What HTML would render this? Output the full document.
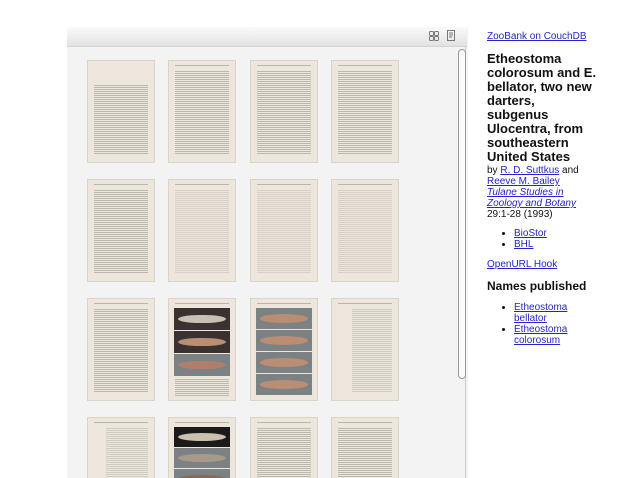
<!DOCTYPE html>
<html style="width:638px;height:478px;overflow:hidden"><head><meta charset="utf-8"><style>
*{margin:0;padding:0;box-sizing:border-box}
body{width:638px;height:478px;background:#fff;position:relative;overflow:hidden;font-family:"Liberation Sans",Arial,sans-serif}
#viewer{position:absolute;left:67px;top:27px;width:401px;height:451px;background:#f3f3f3;overflow:hidden}
#tb{position:absolute;left:0;top:0;width:400px;height:20px;background:linear-gradient(#fafafa,#e2e2e2);border-bottom:1px solid #d4d4d4}
#sb{position:absolute;left:391px;top:22px;width:8px;height:330px;border:1px solid #999;border-radius:4px;background:#fafafa}
#sbl{position:absolute;left:398px;top:20px;width:1px;height:431px;background:#ccc}
.pg{position:absolute;width:68px;height:103px;background:#ece6dc;border:1px solid #d9d3c8}
.tx{position:absolute;left:6px;right:6px;top:10px;bottom:8px;background:repeating-linear-gradient(#b5b0a7 0 1px,#ece6dc 1px 2px);opacity:.85}
.hd{position:absolute;left:6px;right:6px;top:4px;height:1px;background:#bbb5ab}
.ph{position:absolute;left:5px;right:5px;background:#3a3230}
.fish{position:absolute;left:4px;right:4px;top:30%;height:40%;border-radius:50%;background:#b98e72}
.lt{background:#7c8184}
a{color:#2424c8;text-decoration:underline}
#side{position:absolute;left:487px;top:31px;width:112px;font-size:10px;line-height:11px;color:#111}
h1{font-size:13px;line-height:14px;font-weight:bold;margin:10px 0 1px}
h2{font-size:12px;font-weight:bold;margin:11px 0 10px}
ul{margin:8px 0 9px 27px}
i a{font-style:italic}
</style></head><body>
<div id="viewer">
<div id="tb">
<svg style="position:absolute;left:361px;top:3px" width="12" height="12" viewBox="0 0 12 12" fill="none" stroke="#777" stroke-width="1"><rect x="1.5" y="1.5" width="4" height="4" rx="1"/><rect x="6.5" y="1.5" width="4" height="4" rx="1"/><rect x="1.5" y="6.5" width="4" height="4" rx="1"/><rect x="6.5" y="6.5" width="4" height="4" rx="1"/></svg>
<svg style="position:absolute;left:379px;top:2px" width="10" height="13" viewBox="0 0 10 13" fill="none" stroke="#777" stroke-width="1"><rect x="1.5" y="1.5" width="7" height="10"/><path d="M3 4h4M3 6h4M3 8h3"/></svg>
</div>
<div id="sbl"></div>
<div id="sb"></div>
</div>

<div style="position:absolute;left:0;top:0;width:638px;height:478px;overflow:hidden">
<div class="pg" style="left:87px;top:60px"><div class="tx" style="top:24px"></div></div>
<div class="pg" style="left:168px;top:60px"><div class="hd"></div><div class="tx"></div></div>
<div class="pg" style="left:250px;top:60px"><div class="hd"></div><div class="tx"></div></div>
<div class="pg" style="left:331px;top:60px"><div class="hd"></div><div class="tx"></div></div>
<div class="pg" style="left:87px;top:179px"><div class="hd"></div><div class="tx"></div></div>
<div class="pg" style="left:168px;top:179px"><div class="hd"></div><div class="tx" style="opacity:.4"></div></div>
<div class="pg" style="left:250px;top:179px"><div class="hd"></div><div class="tx" style="opacity:.4"></div></div>
<div class="pg" style="left:331px;top:179px"><div class="hd"></div><div class="tx" style="opacity:.4"></div></div>
<div class="pg" style="left:87px;top:298px"><div class="hd"></div><div class="tx"></div></div>
<div class="pg" style="left:168px;top:298px"><div class="hd"></div>
 <div class="ph" style="top:9px;height:22px"><div class="fish" style="background:#c8c0b5"></div></div>
 <div class="ph" style="top:32px;height:22px"><div class="fish"></div></div>
 <div class="ph lt" style="top:55px;height:22px"><div class="fish" style="background:#b07f6c"></div></div>
 <div class="tx" style="top:80px;bottom:4px"></div></div>
<div class="pg" style="left:250px;top:298px"><div class="hd"></div>
 <div class="ph lt" style="top:9px;height:21px"><div class="fish"></div></div>
 <div class="ph lt" style="top:31px;height:21px"><div class="fish"></div></div>
 <div class="ph lt" style="top:53px;height:21px"><div class="fish"></div></div>
 <div class="ph lt" style="top:75px;height:21px"><div class="fish"></div></div></div>
<div class="pg" style="left:331px;top:298px"><div class="hd"></div><div class="tx" style="left:20px;opacity:.5"></div></div>
<div class="pg" style="left:87px;top:417px"><div class="hd"></div><div class="tx" style="left:18px;opacity:.5"></div></div>
<div class="pg" style="left:168px;top:417px"><div class="hd"></div>
 <div class="ph" style="top:9px;height:20px;background:#1c1a1a"><div class="fish" style="background:#c9c0ae"></div></div>
 <div class="ph lt" style="top:30px;height:20px"><div class="fish" style="background:#a89a88"></div></div>
 <div class="ph lt" style="top:51px;height:20px"><div class="fish" style="background:#8a6a52"></div></div></div>
<div class="pg" style="left:250px;top:417px"><div class="hd"></div><div class="tx"></div></div>
<div class="pg" style="left:331px;top:417px"><div class="hd"></div><div class="tx"></div></div>
</div>

<div id="side">
<a>ZooBank on CouchDB</a>
<h1>Etheostoma colorosum and E. bellator, two new darters, subgenus Ulocentra, from southeastern United States</h1>
by <a>R. D. Suttkus</a> and<br><a>Reeve M. Bailey</a><br><i><a>Tulane Studies in<br>Zoology and Botany</a></i><br>29:1-28 (1993)
<ul><li><a>BioStor</a></li><li><a>BHL</a></li></ul>
<a>OpenURL Hook</a>
<h2>Names published</h2>
<ul style="margin-top:0"><li><a>Etheostoma<br>bellator</a></li><li><a>Etheostoma<br>colorosum</a></li></ul>
</div>
</body></html>
